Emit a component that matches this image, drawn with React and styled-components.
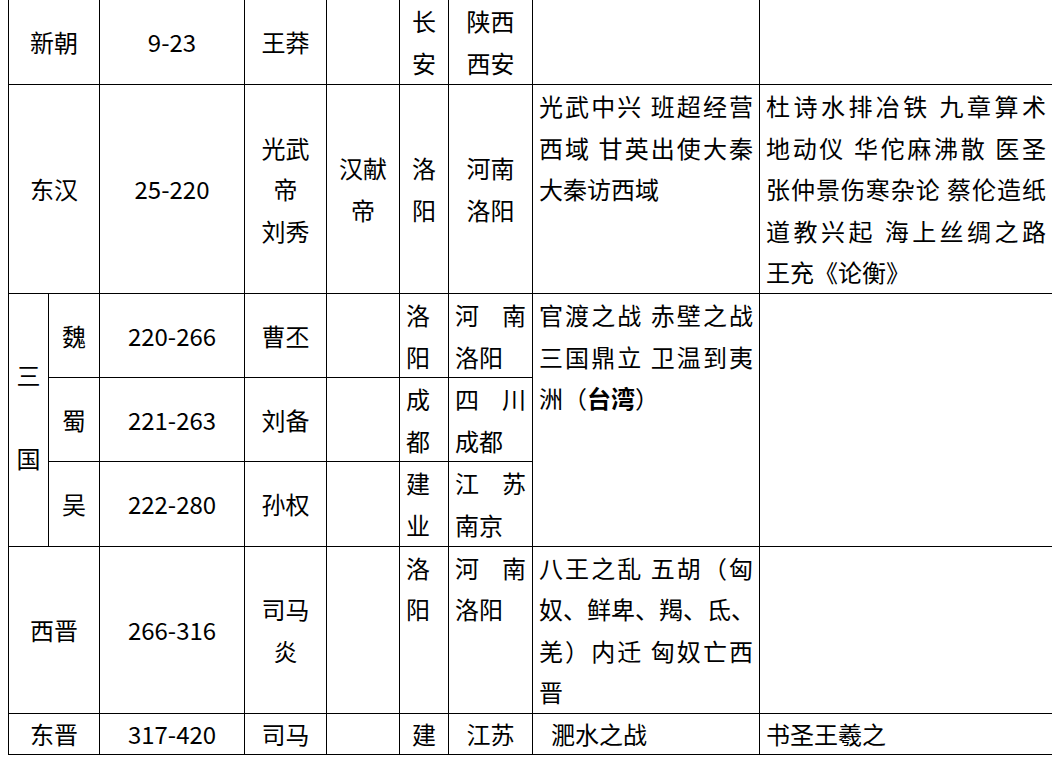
import React from "react";
import styled, { createGlobalStyle } from "styled-components";

const Global = createGlobalStyle`
  html, body { background: #fff; }
  body { margin: 0 8px; }
`;

const Table = styled.table`
  margin-top: -1px;
  border-collapse: collapse;
  table-layout: fixed;
  width: 1045px;
  font-family: "Noto Sans CJK SC", "Microsoft YaHei", sans-serif;
  font-size: 24px;
  line-height: 41.6px;
  color: #000;
`;

const Row = styled.tr`
  height: ${(p) => p.$h}px;
  ${(p) => (p.$lh ? `line-height: ${p.$lh}px;` : "")}
`;

const Cell = styled.td`
  border: 1px solid #000;
  padding: 0 6px;
  text-align: ${(p) => p.$align || "center"};
  vertical-align: ${(p) => p.$valign || "middle"};
  white-space: nowrap;
  overflow: visible;
  ${(p) => (p.$indent ? `padding-left: ${p.$indent}px;` : "")}
`;

const Line = styled.div`
  white-space: nowrap;
  ${(p) =>
    p.$spread
      ? `text-align: justify; text-align-last: justify;`
      : ""}
`;

const Tall = styled.div`
  line-height: 83px;
`;

const TallGroup = styled.div`
  padding-bottom: 7px;
`;

const Bold = styled.b`
  font-weight: 700;
`;

const widths = [40, 51, 145, 82, 73, 49, 84, 227, 293];

export default function App() {
  return (
    <>
      <Global />
      <Table>
        <colgroup>
          {widths.map((w, i) => (
            <col key={i} style={{ width: w }} />
          ))}
        </colgroup>
        <tbody>
          <Row $h={85}>
            <Cell colSpan={2}>新朝</Cell>
            <Cell>9-23</Cell>
            <Cell>王莽</Cell>
            <Cell />
            <Cell>
              <Line>长</Line>
              <Line>安</Line>
            </Cell>
            <Cell>
              <Line>陕西</Line>
              <Line>西安</Line>
            </Cell>
            <Cell />
            <Cell />
          </Row>
          <Row $h={209}>
            <Cell colSpan={2}>东汉</Cell>
            <Cell>25-220</Cell>
            <Cell>
              <Line>光武</Line>
              <Line>帝</Line>
              <Line>刘秀</Line>
            </Cell>
            <Cell>
              <Line>汉献</Line>
              <Line>帝</Line>
            </Cell>
            <Cell>
              <Line>洛</Line>
              <Line>阳</Line>
            </Cell>
            <Cell>
              <Line>河南</Line>
              <Line>洛阳</Line>
            </Cell>
            <Cell $align="left" $valign="top">
              <Line $spread>光武中兴 班超经营</Line>
              <Line $spread>西域 甘英出使大秦</Line>
              <Line>大秦访西域</Line>
            </Cell>
            <Cell $align="left" $valign="top">
              <Line $spread>杜诗水排冶铁 九章算术</Line>
              <Line $spread>地动仪 华佗麻沸散 医圣</Line>
              <Line $spread>张仲景伤寒杂论 蔡伦造纸</Line>
              <Line $spread>道教兴起 海上丝绸之路</Line>
              <Line>王充《论衡》</Line>
            </Cell>
          </Row>
          <Row $h={84}>
            <Cell rowSpan={3}>
              <TallGroup>
                <Tall>三</Tall>
                <Tall>国</Tall>
              </TallGroup>
            </Cell>
            <Cell>魏</Cell>
            <Cell>220-266</Cell>
            <Cell>曹丕</Cell>
            <Cell />
            <Cell $align="left">
              <Line>洛</Line>
              <Line>阳</Line>
            </Cell>
            <Cell $align="left">
              <Line $spread>河南</Line>
              <Line>洛阳</Line>
            </Cell>
            <Cell rowSpan={3} $align="left" $valign="top">
              <Line $spread>官渡之战 赤壁之战</Line>
              <Line $spread>三国鼎立 卫温到夷</Line>
              <Line>
                洲（<Bold>台湾</Bold>）
              </Line>
            </Cell>
            <Cell rowSpan={3} />
          </Row>
          <Row $h={84}>
            <Cell>蜀</Cell>
            <Cell>221-263</Cell>
            <Cell>刘备</Cell>
            <Cell />
            <Cell $align="left">
              <Line>成</Line>
              <Line>都</Line>
            </Cell>
            <Cell $align="left">
              <Line $spread>四川</Line>
              <Line>成都</Line>
            </Cell>
          </Row>
          <Row $h={84}>
            <Cell>吴</Cell>
            <Cell>222-280</Cell>
            <Cell>孙权</Cell>
            <Cell />
            <Cell $align="left">
              <Line>建</Line>
              <Line>业</Line>
            </Cell>
            <Cell $align="left">
              <Line $spread>江苏</Line>
              <Line>南京</Line>
            </Cell>
          </Row>
          <Row $h={167}>
            <Cell colSpan={2}>西晋</Cell>
            <Cell>266-316</Cell>
            <Cell>
              <Line>司马</Line>
              <Line>炎</Line>
            </Cell>
            <Cell />
            <Cell $align="left" $valign="top">
              <Line>洛</Line>
              <Line>阳</Line>
            </Cell>
            <Cell $align="left" $valign="top">
              <Line $spread>河南</Line>
              <Line>洛阳</Line>
            </Cell>
            <Cell $align="left" $valign="top">
              <Line $spread>八王之乱 五胡（匈</Line>
              <Line $spread>奴、鲜卑、羯、氐、</Line>
              <Line $spread>羌）内迁 匈奴亡西</Line>
              <Line>晋</Line>
            </Cell>
            <Cell />
          </Row>
          <Row $h={41} $lh={38}>
            <Cell colSpan={2}>东晋</Cell>
            <Cell>317-420</Cell>
            <Cell>司马</Cell>
            <Cell />
            <Cell>建</Cell>
            <Cell>江苏</Cell>
            <Cell $align="left" $indent={18}>
              淝水之战
            </Cell>
            <Cell $align="left">书圣王羲之</Cell>
          </Row>
        </tbody>
      </Table>
    </>
  );
}
